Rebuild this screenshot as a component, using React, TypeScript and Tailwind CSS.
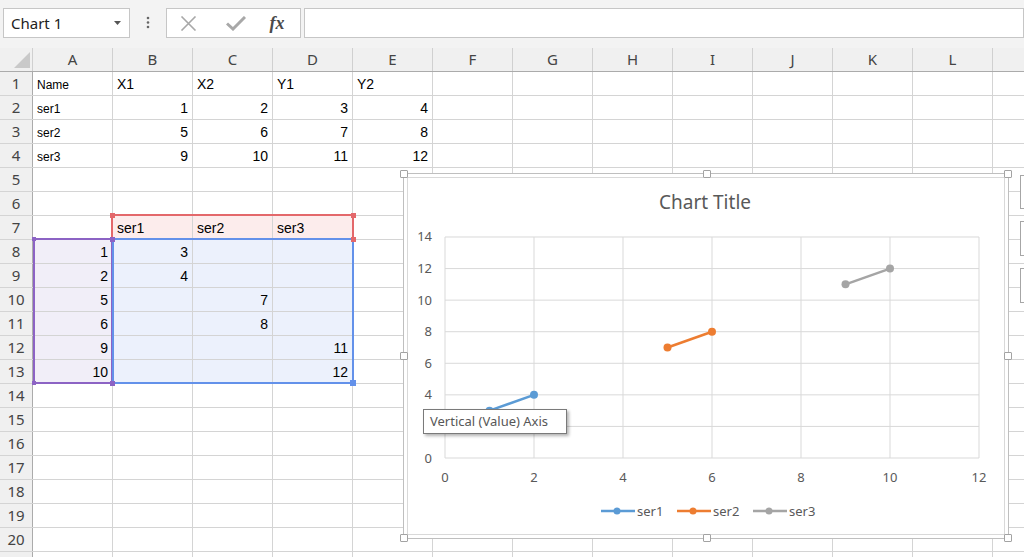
import React from "react";

type Cell = { t: string; r?: boolean; s?: boolean };

const cols = ["A", "B", "C", "D", "E", "F", "G", "H", "I", "J", "K", "L", ""];

const data: Record<number, Record<number, Cell>> = {
  1: { 0: { t: "Name", s: true }, 1: { t: "X1" }, 2: { t: "X2" }, 3: { t: "Y1" }, 4: { t: "Y2" } },
  2: { 0: { t: "ser1", s: true }, 1: { t: "1", r: true }, 2: { t: "2", r: true }, 3: { t: "3", r: true }, 4: { t: "4", r: true } },
  3: { 0: { t: "ser2", s: true }, 1: { t: "5", r: true }, 2: { t: "6", r: true }, 3: { t: "7", r: true }, 4: { t: "8", r: true } },
  4: { 0: { t: "ser3", s: true }, 1: { t: "9", r: true }, 2: { t: "10", r: true }, 3: { t: "11", r: true }, 4: { t: "12", r: true } },
  7: { 1: { t: "ser1" }, 2: { t: "ser2" }, 3: { t: "ser3" } },
  8: { 0: { t: "1", r: true }, 1: { t: "3", r: true } },
  9: { 0: { t: "2", r: true }, 1: { t: "4", r: true } },
  10: { 0: { t: "5", r: true }, 2: { t: "7", r: true } },
  11: { 0: { t: "6", r: true }, 2: { t: "8", r: true } },
  12: { 0: { t: "9", r: true }, 3: { t: "11", r: true } },
  13: { 0: { t: "10", r: true }, 3: { t: "12", r: true } },
};

const cellBg = (r: number, c: number) => {
  if (r === 7 && c >= 1 && c <= 3) return "bg-[#fcecec]";
  if (r >= 8 && r <= 13 && c === 0) return "bg-[#f1eef8]";
  if (r >= 8 && r <= 13 && c >= 1 && c <= 3) return "bg-[#ecf1fc]";
  return "bg-white";
};

const Toolbar = () => (
  <div className="flex h-[48px] items-start bg-[#f3f3f3] pl-[3px] pt-[8px]">
    <div className="flex h-[30px] w-[128px] items-center justify-between border border-[#c6c6c6] bg-white pl-[7px] pr-[8px]">
      <span className="font-['Noto_Sans'] text-[15px] text-[#222]">Chart 1</span>
      <svg width="7" height="4" viewBox="0 0 7 4">
        <path d="M0 0 L7 0 L3.5 4 Z" fill="#555" />
      </svg>
    </div>
    <div className="ml-[16px] mt-[8px] flex w-[4px]">
      <svg width="4" height="13" viewBox="0 0 4 13">
        <circle cx="2" cy="2" r="1.3" fill="#666" />
        <circle cx="2" cy="6.5" r="1.3" fill="#666" />
        <circle cx="2" cy="11" r="1.3" fill="#666" />
      </svg>
    </div>
    <div className="ml-[16px] flex h-[30px] w-[137px] items-center border border-[#c6c6c6] bg-white pl-[13px]">
      <svg width="17" height="15" viewBox="0 0 17 15">
        <path d="M1.5 0.5 L15.5 14.5 M15.5 0.5 L1.5 14.5" stroke="#a8a8a8" strokeWidth="1.6" />
      </svg>
      <svg className="ml-[29px]" width="20" height="15" viewBox="0 0 20 15">
        <path d="M1 7.5 L7 13 L19 1" stroke="#a8a8a8" strokeWidth="3" fill="none" />
      </svg>
      <span className="ml-[24px] font-['Liberation_Serif'] text-[18px] font-bold italic text-[#4a4a4a]">fx</span>
    </div>
    <div className="ml-[3px] h-[30px] w-[730px] border border-[#c6c6c6] bg-white" />
  </div>
);

const HeaderRow = () => (
  <div className="flex h-[24px] border-b border-[#ababab] bg-[#f0f0f0]">
    <div className="relative w-[33px] shrink-0 border-r border-[#d0d0d0]">
      <svg className="absolute left-[14px] top-[4px]" width="16" height="16" viewBox="0 0 16 16">
        <path d="M16 0 L16 16 L0 16 Z" fill="#c9c9c9" />
      </svg>
    </div>
    {cols.map((c, i) => (
      <div
        key={i}
        className="flex w-[80px] shrink-0 items-center justify-center border-r border-[#d0d0d0] font-['Noto_Sans'] text-[15px] text-[#444]"
      >
        {c}
      </div>
    ))}
  </div>
);

const Row = ({ r }: { r: number }) => (
  <div className="flex h-[24px] border-b border-[#d4d4d4]">
    <div className="flex w-[33px] shrink-0 items-center justify-center border-r border-[#ababab] bg-[#f0f0f0] font-['Noto_Sans'] text-[15px] text-[#444]">
      {r <= 20 ? r : ""}
    </div>
    {cols.map((c, i) => {
      const cell = data[r]?.[i];
      return (
        <div
          key={i}
          className={`flex w-[80px] shrink-0 items-end border-r border-[#d4d4d4] pb-[2px] font-['Liberation_Sans'] text-black ${cellBg(r, i)} ${
            cell?.r ? "justify-end pr-[4px]" : "pl-[4px]"
          } ${cell?.s ? "text-[12px] leading-[16px]" : "text-[14px] leading-[18px]"}`}
        >
          {cell?.t}
        </div>
      );
    })}
  </div>
);

const Handle = ({ x, y, c, size = 5 }: { x: number; y: number; c: string; size?: number }) => (
  <div
    className={`absolute ${c}`}
    style={{ left: x - size / 2, top: y - size / 2, width: size, height: size }}
  />
);

const Selections = () => (
  <>
    <div className="absolute left-[111px] top-[214px] h-[26px] w-[243px] border-2 border-[#e3686b]" />
    <div className="absolute left-[33px] top-[238px] h-[146px] w-[80px] border-2 border-[#8c63c4]" />
    <div className="absolute left-[112px] top-[238px] h-[146px] w-[242px] border-2 border-[#6391ea]" />
    <Handle x={112} y={215} c="bg-[#e3686b]" />
    <Handle x={353} y={215} c="bg-[#e3686b]" />
    <Handle x={353} y={239} c="bg-[#e3686b]" />
    <Handle x={34} y={239} c="bg-[#8c63c4]" size={4} />
    <Handle x={112} y={239} c="bg-[#8c63c4]" />
    <Handle x={34} y={383} c="bg-[#8c63c4]" size={4} />
    <Handle x={112} y={383} c="bg-[#8c63c4]" />
    <Handle x={353} y={383} c="bg-[#6391ea]" size={6} />
  </>
);

// plot geometry, relative to chart box
const px = (u: number) => 42 + u * 44.5;
const py = (v: number) => 285 - v * 15.786;

const series = [
  { name: "ser1", color: "#5b9bd5", pts: [[1, 3], [2, 4]] },
  { name: "ser2", color: "#ed7d31", pts: [[5, 7], [6, 8]] },
  { name: "ser3", color: "#a5a5a5", pts: [[9, 11], [10, 12]] },
];

const legend = [
  { x1: 198, x2: 232, m: 214, tx: 234 },
  { x1: 274, x2: 308, m: 290, tx: 310 },
  { x1: 350, x2: 384, m: 366, tx: 386 },
];

const ChartHandle = ({ x, y }: { x: number; y: number }) => (
  <div
    className="absolute h-[8px] w-[8px] rounded-[1px] border border-[#a3a3a3] bg-white"
    style={{ left: x - 4, top: y - 4 }}
  />
);

const Chart = () => (
  <div className="absolute left-[403px] top-[173px] h-[366px] w-[606px] border border-[#bfbfbf] bg-white">
    <div className="absolute inset-[3px] border border-[#d9d9d9]" />
    <svg className="absolute left-[-1px] top-[-1px]" width="606" height="366" viewBox="0 0 606 366">
      <text x="302" y="36" textAnchor="middle" fontFamily="Noto Sans" fontSize="19" fill="#595959">
        Chart Title
      </text>
      {[0, 2, 4, 6, 8, 10, 12, 14].map((v) => (
        <g key={`h${v}`}>
          <line x1={px(0)} x2={px(12)} y1={py(v)} y2={py(v)} stroke="#d9d9d9" strokeWidth="1" />
          <text x="29" y={py(v) + 4.5} textAnchor="end" fontFamily="Noto Sans" fontSize="13" fill="#595959">
            {v}
          </text>
        </g>
      ))}
      {[0, 2, 4, 6, 8, 10, 12].map((u) => (
        <g key={`v${u}`}>
          <line x1={px(u)} x2={px(u)} y1={py(14)} y2={py(0)} stroke="#d9d9d9" strokeWidth="1" />
          <text x={px(u)} y="309" textAnchor="middle" fontFamily="Noto Sans" fontSize="13" fill="#595959">
            {u}
          </text>
        </g>
      ))}
      {series.map((s) => (
        <g key={s.name}>
          <line
            x1={px(s.pts[0][0])}
            y1={py(s.pts[0][1])}
            x2={px(s.pts[1][0])}
            y2={py(s.pts[1][1])}
            stroke={s.color}
            strokeWidth="2.5"
          />
          {s.pts.map((p, i) => (
            <circle key={i} cx={px(p[0])} cy={py(p[1])} r="4" fill={s.color} />
          ))}
        </g>
      ))}
      {series.map((s, i) => (
        <g key={`l${s.name}`}>
          <line x1={legend[i].x1} x2={legend[i].x2} y1="338" y2="338" stroke={s.color} strokeWidth="2.5" />
          <circle cx={legend[i].m} cy="338" r="3.5" fill={s.color} />
          <text x={legend[i].tx} y="342.5" fontFamily="Noto Sans" fontSize="13" fill="#595959">
            {s.name}
          </text>
        </g>
      ))}
    </svg>
    <ChartHandle x={0} y={0} />
    <ChartHandle x={303} y={0} />
    <ChartHandle x={604} y={0} />
    <ChartHandle x={0} y={182} />
    <ChartHandle x={604} y={182} />
    <ChartHandle x={0} y={364} />
    <ChartHandle x={303} y={364} />
    <ChartHandle x={604} y={364} />
  </div>
);

const SideButtons = () => (
  <div className="absolute left-[1020px] top-[175px] flex flex-col gap-[12px]">
    <div className="h-[34px] w-[12px] border border-[#a6a6a6] bg-white" />
    <div className="h-[35px] w-[12px] border border-[#a6a6a6] bg-white" />
    <div className="h-[35px] w-[12px] border border-[#a6a6a6] bg-white" />
  </div>
);

export default function App() {
  const rows = Array.from({ length: 21 }, (_, i) => i + 1);
  return (
    <div className="relative h-[557px] w-[1024px] overflow-hidden bg-white">
      <Toolbar />
      <HeaderRow />
      {rows.map((r) => (
        <Row key={r} r={r} />
      ))}
      <Selections />
      <Chart />
      <SideButtons />
      <div className="absolute left-[423px] top-[409px] flex h-[25px] w-[144px] items-center border border-[#7a7a7a] bg-white pl-[6px] font-['Noto_Sans'] text-[13px] text-[#575757] shadow-[2px_2px_3px_rgba(0,0,0,0.3)]">
        Vertical (Value) Axis
      </div>
    </div>
  );
}
